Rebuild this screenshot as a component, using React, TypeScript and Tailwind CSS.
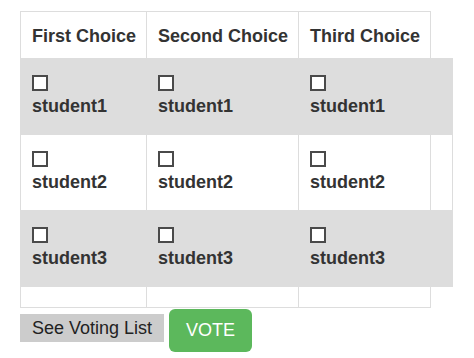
import React from "react";

const students = ["student1", "student2", "student3"];
const choices = ["First Choice", "Second Choice", "Third Choice"];

function Box() {
  return (
    <span className="block h-[16px] w-[16px] border-2 border-[#4a4a4a] bg-white" />
  );
}

export default function App() {
  return (
    <div
      className="min-h-screen bg-white pl-[20px] pt-[11px] text-[18px] text-[#333]"
      style={{ fontFamily: '"Liberation Sans", Arial, sans-serif' }}
    >
      <table className="border-collapse">
        <thead>
          <tr>
            {choices.map((c) => (
              <th
                key={c}
                className="border border-[#dddddd] pb-[11px] pl-[11px] pr-[10px] pt-[13px] text-left font-bold leading-[22px]"
              >
                {c}
              </th>
            ))}
          </tr>
        </thead>
        <tbody>
          {students.map((s, i) => (
            <tr key={s} className={i % 2 === 0 ? "bg-[#dddddd]" : "bg-white"}>
              {choices.map((c) => (
                <td
                  key={c}
                  className="border border-[#dddddd] pb-[17px] pl-[11px] pr-[10px] pt-[16px] align-top"
                >
                  <Box />
                  <div className="mt-[4px] font-bold leading-[22px]">{s}</div>
                </td>
              ))}
              <td className="w-[22px] border border-[#dddddd] p-0" />
            </tr>
          ))}
          <tr>
            {choices.map((c) => (
              <td key={c} className="h-[21px] border border-[#dddddd] p-0" />
            ))}
          </tr>
        </tbody>
      </table>
      <div className="flex items-start gap-[5px]">
        <button className="mt-[6px] h-[28px] bg-[#cccccc] px-[12px] leading-[28px] text-[#222]">
          See Voting List
        </button>
        <button className="mt-[1px] h-[43px] rounded-[6px] bg-[#5cb85c] px-[17px] text-white">
          VOTE
        </button>
      </div>
    </div>
  );
}
